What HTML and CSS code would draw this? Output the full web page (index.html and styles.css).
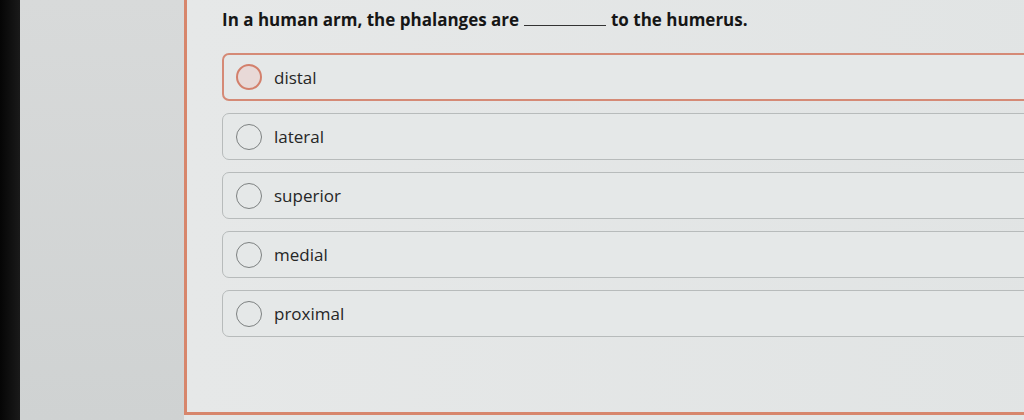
FILE: index.html
```html
<!DOCTYPE html>
<html lang="en">
<head>
    <meta charset="UTF-8">
    <title>Question</title>
    <link rel="stylesheet" href="styles.css">
</head>
<body>
    <div class="bezel"></div>
    <div class="sidebar"></div>

    <!-- Question panel -->
    <main class="panel">
        <p class="question">In a human arm, the phalanges are <span class="blank"></span> to the humerus.</p>

        <div class="options">
            <label class="option selected"><span class="radio"></span><span class="text">distal</span></label>
            <label class="option"><span class="radio"></span><span class="text">lateral</span></label>
            <label class="option"><span class="radio"></span><span class="text">superior</span></label>
            <label class="option"><span class="radio"></span><span class="text">medial</span></label>
            <label class="option"><span class="radio"></span><span class="text">proximal</span></label>
        </div>
    </main>
</body>
</html>
```
FILE: styles.css
```css
html, body {
    margin: 0;
    height: 420px;
    overflow: hidden;
}

body {
    display: flex;
    font-family: 'Open Sans', sans-serif;
    color: #1c1c1c;
    background: #e3e6e6;
}

.bezel {
    width: 20px;
    flex-shrink: 0;
    background: linear-gradient(to right, #050505, #1a1a1a);
}

.sidebar {
    width: 164px;
    flex-shrink: 0;
    background: linear-gradient(to bottom, #d8dada, #cfd2d2);
}

.panel {
    flex: 1;
    height: 415px;
    box-sizing: border-box;
    border-left: 3px solid #d7866c;
    border-bottom: 3px solid #d7866c;
    background: linear-gradient(to right, #e6e8e8, #e1e4e4);
    padding: 7px 0 0 35px;
    margin-right: -40px;
}

.question {
    margin: 0;
    font-size: 17px;
    font-weight: 700;
    line-height: 25px;
    color: #161616;
}

.blank {
    display: inline-block;
    width: 82px;
    height: 17px;
    border-bottom: 1px solid #333;
    vertical-align: baseline;
    margin-right: 1px;
}

.options {
    display: flex;
    flex-direction: column;
    gap: 12px;
    margin-top: 21px;
}

.option {
    display: flex;
    align-items: center;
    height: 47px;
    box-sizing: border-box;
    border: 1px solid #b7bbbb;
    border-radius: 7px;
    background: #e5e8e8;
    padding-left: 13px;
    font-size: 17px;
    color: #262626;
}

.option.selected {
    border: 2px solid #d58a76;
    padding-left: 12px;
    height: 48px;
}

.radio {
    width: 26px;
    height: 26px;
    box-sizing: border-box;
    border: 1.5px solid #7d8181;
    border-radius: 50%;
    margin-right: 12px;
}

.selected .radio {
    border: 2px solid #d3806c;
    background: #e8d9d7;
}
```
